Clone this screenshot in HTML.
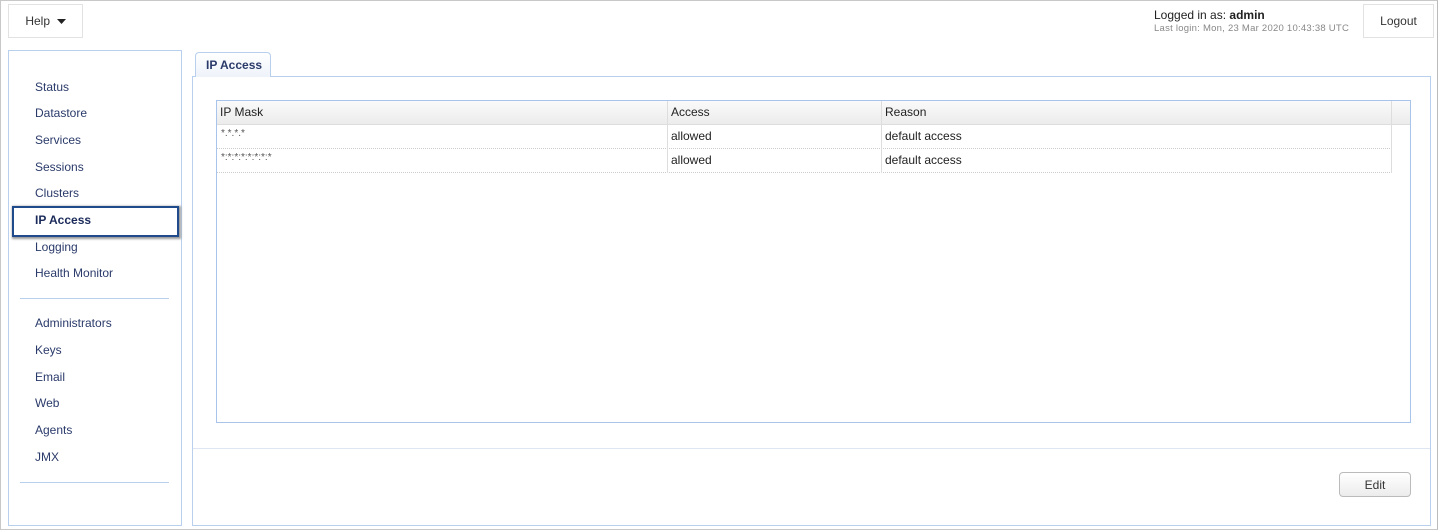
<!DOCTYPE html>
<html><head><style>
*{box-sizing:border-box;margin:0;padding:0}
body{width:1438px;height:530px;background:#fff;font-family:"Liberation Sans",Arial,sans-serif;font-size:12px;color:#222;position:relative;overflow:hidden}
.frame{position:absolute;left:0;top:0;width:1438px;height:530px;border:1px solid #c8c8c8;border-right-color:#bbb}
.btn{position:absolute;border:1px solid #e2e2e2;background:#fff;font-size:12px;color:#333;display:flex;align-items:center;justify-content:center}
.nav{position:absolute;left:8px;top:50px;width:174px;height:476px;border:1px solid #b8d0ee}
.nav a{position:absolute;left:26px;color:#2a3a6a;font-size:12px;text-decoration:none}
.sep{position:absolute;left:11px;width:149px;border-top:1px solid #b8d0ee}
.sel{position:absolute;left:3px;top:155px;width:167px;height:31px;border:2px solid #1f4a8c;box-shadow:1px 1px 2px 1px #999}
.main{position:absolute;left:192px;top:76px;width:1239px;height:450px;border:1px solid #b8d0ee}
.tab{position:absolute;left:195px;top:52px;width:76px;height:25px;border:1px solid #b8d0ee;border-bottom:none;border-radius:4px 4px 0 0;background:linear-gradient(#fff,#eef3fa);font-weight:bold;color:#2a3a6a;padding:5px 0 0 10px;font-size:12px;z-index:2}
.tbl{position:absolute;left:216px;top:100px;width:1195px;height:323px;border:1px solid #a8c4ea}
.hdr{position:absolute;left:0;top:0;width:1193px;height:24px;background:linear-gradient(#fafafa,#ececec);border-bottom:1px solid #ddd}
.c{position:absolute;font-size:12px;color:#222}
.vl{position:absolute;top:0;width:0;border-left:1px solid #ddd}
.row{position:absolute;left:0;width:1175px;height:24px;border-bottom:1px dotted #ccc}
</style></head><body>
<div class="frame"></div>
<div class="btn" style="left:8px;top:4px;width:75px;height:34px">Help&nbsp;&nbsp;<svg width="9" height="5"><path d="M0 0H9L4.5 5Z" fill="#222"/></svg></div>
<div style="position:absolute;left:1154px;top:8px;font-size:12px;color:#222">Logged in as: <b>admin</b></div>
<div style="position:absolute;left:1154px;top:23px;font-size:9.5px;color:#888;letter-spacing:0.25px">Last login: Mon, 23 Mar 2020 10:43:38 UTC</div>
<div class="btn" style="left:1363px;top:4px;width:71px;height:34px">Logout</div>

<div class="nav">
<a style="top:29px">Status</a><a style="top:55px">Datastore</a><a style="top:82px">Services</a><a style="top:109px">Sessions</a><a style="top:135px">Clusters</a>
<div class="sel"></div><a style="top:162px;font-weight:bold;color:#1a2a5a">IP Access</a>
<a style="top:189px">Logging</a><a style="top:215px">Health Monitor</a>
<div class="sep" style="top:247px"></div>
<a style="top:265px">Administrators</a><a style="top:292px">Keys</a><a style="top:319px">Email</a><a style="top:345px">Web</a><a style="top:372px">Agents</a><a style="top:399px">JMX</a>
<div class="sep" style="top:431px"></div>
</div>

<div class="tab">IP Access</div>
<div class="main">
<div style="position:absolute;left:0;top:371px;width:1237px;border-top:1px solid #dde6f2"></div>
<div style="position:absolute;left:1146px;top:395px;width:72px;height:25px;border:1px solid #bbb;border-radius:4px;background:linear-gradient(#fff,#ececec);display:flex;align-items:center;justify-content:center;color:#333">Edit</div>
</div>
<div class="tbl">
<div class="hdr"></div>
<div class="c" style="left:3px;top:4px">IP Mask</div>
<div class="c" style="left:454px;top:4px">Access</div>
<div class="c" style="left:668px;top:4px">Reason</div>
<div class="row" style="top:24px"></div>
<div class="row" style="top:48px"></div>
<div class="vl" style="left:450px;height:72px"></div>
<div class="vl" style="left:664px;height:72px"></div>
<div class="vl" style="left:1174px;height:72px"></div>
<div class="c" style="left:4px;top:27px;font-size:10px;color:#555">*.*.*.*</div>
<div class="c" style="left:454px;top:28px">allowed</div>
<div class="c" style="left:668px;top:28px">default access</div>
<div class="c" style="left:4px;top:51px;font-size:10px;color:#555">*:*:*:*:*:*:*:*</div>
<div class="c" style="left:454px;top:52px">allowed</div>
<div class="c" style="left:668px;top:52px">default access</div>
</div>
</body></html>
